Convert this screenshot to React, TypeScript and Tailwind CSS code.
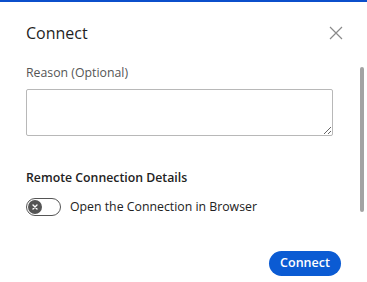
import React, { useState } from 'react';

export default function App() {
  const [reason, setReason] = useState('');
  const [openInBrowser, setOpenInBrowser] = useState(false);

  return (
    <div
      className="relative w-[367px] h-[282px] bg-white overflow-hidden border-t-2 border-[#0b4fcb]"
      style={{ fontFamily: '"Open Sans", "Noto Sans", sans-serif' }}
    >
      <div className="flex items-center justify-between pl-[26px] pr-[23px] pt-[19px]">
        <h2 className="text-[16px] leading-[24px] font-normal text-[#1f1f1f]">Connect</h2>
        <button className="w-[16px] h-[16px] flex items-center justify-center text-[#8a8a8a]">
          <svg width="14" height="14" viewBox="0 0 14 14" fill="none" stroke="currentColor" strokeWidth="1.2">
            <path d="M1 1L13 13M13 1L1 13" />
          </svg>
        </button>
      </div>

      <div className="pl-[26px] pr-[34px] pt-[19px]">
        <label className="block text-[12.3px] leading-[18px] text-[#555]">Reason (Optional)</label>
        <textarea
          value={reason}
          onChange={(e) => setReason(e.target.value)}
          className="block mt-[7px] w-[307px] h-[47px] border border-[#b8b8b8] rounded-[2px] px-2 py-1 text-[13px] outline-none"
        />

        <h3 className="mt-[33px] text-[12.3px] leading-[18px] font-semibold text-[#222]">Remote Connection Details</h3>

        <div className="flex items-center gap-[9px] mt-[11px]">
          <button
            onClick={() => setOpenInBrowser(!openInBrowser)}
            className="w-[35px] h-[18px] rounded-full border border-[#555] bg-white flex items-center px-[1px]"
          >
            <span className="w-[14px] h-[14px] rounded-full bg-[#555] flex items-center justify-center">
              <svg width="6" height="6" viewBox="0 0 6 6" stroke="white" strokeWidth="1.4" strokeLinecap="round">
                <path d="M1 1L5 5M5 1L1 5" />
              </svg>
            </span>
          </button>
          <span className="text-[12.3px] leading-[18px] text-[#222]">Open the Connection in Browser</span>
        </div>
      </div>

      <div className="flex justify-end pr-[26px] mt-[35px]">
        <button className="h-[25px] w-[72px] rounded-full bg-[#0b5bd3] text-white text-[12.5px] font-semibold leading-none">
          Connect
        </button>
      </div>

      <div className="absolute right-[3px] top-[65px] w-[4px] h-[145px] rounded-full bg-[#a3a3a3]" />
    </div>
  );
}
